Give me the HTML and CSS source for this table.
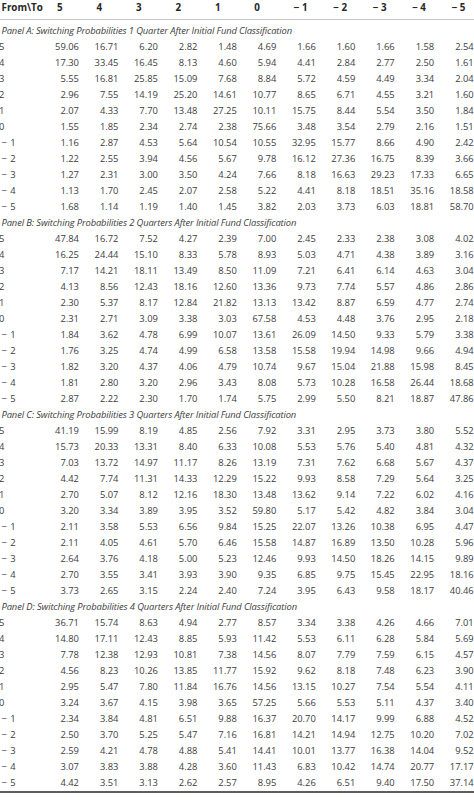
FILE: index.html
```html
<!DOCTYPE html>
<html lang="en">
<head>
<meta charset="utf-8">
<title>Switching Probabilities</title>
<link rel="stylesheet" href="styles.css">
</head>
<body>
<table class="matrix">
<colgroup>
<col class="lab-col">
<col class="val-col"><col class="val-col"><col class="val-col"><col class="val-col"><col class="val-col"><col class="val-col"><col class="val-col"><col class="val-col"><col class="val-col"><col class="val-col"><col class="val-col">
</colgroup>
<thead>
<tr><th class="corner">From\To</th><th>5</th><th>4</th><th>3</th><th>2</th><th>1</th><th>0</th><th>− 1</th><th>− 2</th><th>− 3</th><th>− 4</th><th>− 5</th></tr>
</thead>
<tbody>
<tr class="panel first"><td colspan="12">Panel A: Switching Probabilities 1 Quarter After Initial Fund Classification</td></tr>
<tr><td class="lab pos">5</td><td>59.06</td><td>16.71</td><td>6.20</td><td>2.82</td><td>1.48</td><td>4.69</td><td>1.66</td><td>1.60</td><td>1.66</td><td>1.58</td><td>2.54</td></tr>
<tr><td class="lab pos">4</td><td>17.30</td><td>33.45</td><td>16.45</td><td>8.13</td><td>4.60</td><td>5.94</td><td>4.41</td><td>2.84</td><td>2.77</td><td>2.50</td><td>1.61</td></tr>
<tr><td class="lab pos">3</td><td>5.55</td><td>16.81</td><td>25.85</td><td>15.09</td><td>7.68</td><td>8.84</td><td>5.72</td><td>4.59</td><td>4.49</td><td>3.34</td><td>2.04</td></tr>
<tr><td class="lab pos">2</td><td>2.96</td><td>7.55</td><td>14.19</td><td>25.20</td><td>14.61</td><td>10.77</td><td>8.65</td><td>6.71</td><td>4.55</td><td>3.21</td><td>1.60</td></tr>
<tr><td class="lab pos">1</td><td>2.07</td><td>4.33</td><td>7.70</td><td>13.48</td><td>27.25</td><td>10.11</td><td>15.75</td><td>8.44</td><td>5.54</td><td>3.50</td><td>1.84</td></tr>
<tr><td class="lab pos">0</td><td>1.55</td><td>1.85</td><td>2.34</td><td>2.74</td><td>2.38</td><td>75.66</td><td>3.48</td><td>3.54</td><td>2.79</td><td>2.16</td><td>1.51</td></tr>
<tr><td class="lab">− 1</td><td>1.16</td><td>2.87</td><td>4.53</td><td>5.64</td><td>10.54</td><td>10.55</td><td>32.95</td><td>15.77</td><td>8.66</td><td>4.90</td><td>2.42</td></tr>
<tr><td class="lab">− 2</td><td>1.22</td><td>2.55</td><td>3.94</td><td>4.56</td><td>5.67</td><td>9.78</td><td>16.12</td><td>27.36</td><td>16.75</td><td>8.39</td><td>3.66</td></tr>
<tr><td class="lab">− 3</td><td>1.27</td><td>2.31</td><td>3.00</td><td>3.50</td><td>4.24</td><td>7.66</td><td>8.18</td><td>16.63</td><td>29.23</td><td>17.33</td><td>6.65</td></tr>
<tr><td class="lab">− 4</td><td>1.13</td><td>1.70</td><td>2.45</td><td>2.07</td><td>2.58</td><td>5.22</td><td>4.41</td><td>8.18</td><td>18.51</td><td>35.16</td><td>18.58</td></tr>
<tr><td class="lab">− 5</td><td>1.68</td><td>1.14</td><td>1.19</td><td>1.40</td><td>1.45</td><td>3.82</td><td>2.03</td><td>3.73</td><td>6.03</td><td>18.81</td><td>58.70</td></tr>
<tr class="panel"><td colspan="12">Panel B: Switching Probabilities 2 Quarters After Initial Fund Classification</td></tr>
<tr><td class="lab pos">5</td><td>47.84</td><td>16.72</td><td>7.52</td><td>4.27</td><td>2.39</td><td>7.00</td><td>2.45</td><td>2.33</td><td>2.38</td><td>3.08</td><td>4.02</td></tr>
<tr><td class="lab pos">4</td><td>16.25</td><td>24.44</td><td>15.10</td><td>8.33</td><td>5.78</td><td>8.93</td><td>5.03</td><td>4.71</td><td>4.38</td><td>3.89</td><td>3.16</td></tr>
<tr><td class="lab pos">3</td><td>7.17</td><td>14.21</td><td>18.11</td><td>13.49</td><td>8.50</td><td>11.09</td><td>7.21</td><td>6.41</td><td>6.14</td><td>4.63</td><td>3.04</td></tr>
<tr><td class="lab pos">2</td><td>4.13</td><td>8.56</td><td>12.43</td><td>18.16</td><td>12.60</td><td>13.36</td><td>9.73</td><td>7.74</td><td>5.57</td><td>4.86</td><td>2.86</td></tr>
<tr><td class="lab pos">1</td><td>2.30</td><td>5.37</td><td>8.17</td><td>12.84</td><td>21.82</td><td>13.13</td><td>13.42</td><td>8.87</td><td>6.59</td><td>4.77</td><td>2.74</td></tr>
<tr><td class="lab pos">0</td><td>2.31</td><td>2.71</td><td>3.09</td><td>3.38</td><td>3.03</td><td>67.58</td><td>4.53</td><td>4.48</td><td>3.76</td><td>2.95</td><td>2.18</td></tr>
<tr><td class="lab">− 1</td><td>1.84</td><td>3.62</td><td>4.78</td><td>6.99</td><td>10.07</td><td>13.61</td><td>26.09</td><td>14.50</td><td>9.33</td><td>5.79</td><td>3.38</td></tr>
<tr><td class="lab">− 2</td><td>1.76</td><td>3.25</td><td>4.74</td><td>4.99</td><td>6.58</td><td>13.58</td><td>15.58</td><td>19.94</td><td>14.98</td><td>9.66</td><td>4.94</td></tr>
<tr><td class="lab">− 3</td><td>1.82</td><td>3.20</td><td>4.37</td><td>4.06</td><td>4.79</td><td>10.74</td><td>9.67</td><td>15.04</td><td>21.88</td><td>15.98</td><td>8.45</td></tr>
<tr><td class="lab">− 4</td><td>1.81</td><td>2.80</td><td>3.20</td><td>2.96</td><td>3.43</td><td>8.08</td><td>5.73</td><td>10.28</td><td>16.58</td><td>26.44</td><td>18.68</td></tr>
<tr><td class="lab">− 5</td><td>2.87</td><td>2.22</td><td>2.30</td><td>1.70</td><td>1.74</td><td>5.75</td><td>2.99</td><td>5.50</td><td>8.21</td><td>18.87</td><td>47.86</td></tr>
<tr class="panel"><td colspan="12">Panel C: Switching Probabilities 3 Quarters After Initial Fund Classification</td></tr>
<tr><td class="lab pos">5</td><td>41.19</td><td>15.99</td><td>8.19</td><td>4.85</td><td>2.56</td><td>7.92</td><td>3.31</td><td>2.95</td><td>3.73</td><td>3.80</td><td>5.52</td></tr>
<tr><td class="lab pos">4</td><td>15.73</td><td>20.33</td><td>13.31</td><td>8.40</td><td>6.33</td><td>10.08</td><td>5.53</td><td>5.76</td><td>5.40</td><td>4.81</td><td>4.32</td></tr>
<tr><td class="lab pos">3</td><td>7.03</td><td>13.72</td><td>14.97</td><td>11.17</td><td>8.26</td><td>13.19</td><td>7.31</td><td>7.62</td><td>6.68</td><td>5.67</td><td>4.37</td></tr>
<tr><td class="lab pos">2</td><td>4.42</td><td>7.74</td><td>11.31</td><td>14.33</td><td>12.29</td><td>15.22</td><td>9.93</td><td>8.58</td><td>7.29</td><td>5.64</td><td>3.25</td></tr>
<tr><td class="lab pos">1</td><td>2.70</td><td>5.07</td><td>8.12</td><td>12.16</td><td>18.30</td><td>13.48</td><td>13.62</td><td>9.14</td><td>7.22</td><td>6.02</td><td>4.16</td></tr>
<tr><td class="lab pos">0</td><td>3.20</td><td>3.34</td><td>3.89</td><td>3.95</td><td>3.52</td><td>59.80</td><td>5.17</td><td>5.42</td><td>4.82</td><td>3.84</td><td>3.04</td></tr>
<tr><td class="lab">− 1</td><td>2.11</td><td>3.58</td><td>5.53</td><td>6.56</td><td>9.84</td><td>15.25</td><td>22.07</td><td>13.26</td><td>10.38</td><td>6.95</td><td>4.47</td></tr>
<tr><td class="lab">− 2</td><td>2.11</td><td>4.05</td><td>4.61</td><td>5.70</td><td>6.46</td><td>15.58</td><td>14.87</td><td>16.89</td><td>13.50</td><td>10.28</td><td>5.96</td></tr>
<tr><td class="lab">− 3</td><td>2.64</td><td>3.76</td><td>4.18</td><td>5.00</td><td>5.23</td><td>12.46</td><td>9.93</td><td>14.50</td><td>18.26</td><td>14.15</td><td>9.89</td></tr>
<tr><td class="lab">− 4</td><td>2.70</td><td>3.55</td><td>3.41</td><td>3.93</td><td>3.90</td><td>9.35</td><td>6.85</td><td>9.75</td><td>15.45</td><td>22.95</td><td>18.16</td></tr>
<tr><td class="lab">− 5</td><td>3.73</td><td>2.65</td><td>3.15</td><td>2.24</td><td>2.40</td><td>7.24</td><td>3.95</td><td>6.43</td><td>9.58</td><td>18.17</td><td>40.46</td></tr>
<tr class="panel"><td colspan="12">Panel D: Switching Probabilities 4 Quarters After Initial Fund Classification</td></tr>
<tr><td class="lab pos">5</td><td>36.71</td><td>15.74</td><td>8.63</td><td>4.94</td><td>2.77</td><td>8.57</td><td>3.34</td><td>3.38</td><td>4.26</td><td>4.66</td><td>7.01</td></tr>
<tr><td class="lab pos">4</td><td>14.80</td><td>17.11</td><td>12.43</td><td>8.85</td><td>5.93</td><td>11.42</td><td>5.53</td><td>6.11</td><td>6.28</td><td>5.84</td><td>5.69</td></tr>
<tr><td class="lab pos">3</td><td>7.78</td><td>12.38</td><td>12.93</td><td>10.81</td><td>7.38</td><td>14.56</td><td>8.07</td><td>7.79</td><td>7.59</td><td>6.15</td><td>4.57</td></tr>
<tr><td class="lab pos">2</td><td>4.56</td><td>8.23</td><td>10.26</td><td>13.85</td><td>11.77</td><td>15.92</td><td>9.62</td><td>8.18</td><td>7.48</td><td>6.23</td><td>3.90</td></tr>
<tr><td class="lab pos">1</td><td>2.95</td><td>5.47</td><td>7.80</td><td>11.84</td><td>16.76</td><td>14.56</td><td>13.15</td><td>10.27</td><td>7.54</td><td>5.54</td><td>4.11</td></tr>
<tr><td class="lab pos">0</td><td>3.24</td><td>3.67</td><td>4.15</td><td>3.98</td><td>3.65</td><td>57.25</td><td>5.66</td><td>5.53</td><td>5.11</td><td>4.37</td><td>3.40</td></tr>
<tr><td class="lab">− 1</td><td>2.34</td><td>3.84</td><td>4.81</td><td>6.51</td><td>9.88</td><td>16.37</td><td>20.70</td><td>14.17</td><td>9.99</td><td>6.88</td><td>4.52</td></tr>
<tr><td class="lab">− 2</td><td>2.50</td><td>3.70</td><td>5.25</td><td>5.47</td><td>7.16</td><td>16.81</td><td>14.21</td><td>14.94</td><td>12.75</td><td>10.20</td><td>7.02</td></tr>
<tr><td class="lab">− 3</td><td>2.59</td><td>4.21</td><td>4.78</td><td>4.88</td><td>5.41</td><td>14.41</td><td>10.01</td><td>13.77</td><td>16.38</td><td>14.04</td><td>9.52</td></tr>
<tr><td class="lab">− 4</td><td>3.07</td><td>3.83</td><td>3.88</td><td>4.28</td><td>3.60</td><td>11.43</td><td>6.83</td><td>10.42</td><td>14.74</td><td>20.77</td><td>17.17</td></tr>
<tr class="last"><td class="lab">− 5</td><td>4.42</td><td>3.51</td><td>3.13</td><td>2.62</td><td>2.57</td><td>8.95</td><td>4.26</td><td>6.51</td><td>9.40</td><td>17.50</td><td>37.14</td></tr>
</tbody>
</table>
</body>
</html>
```

FILE: styles.css
```css
html, body {
  margin: 0;
  padding: 0;
  background: #ffffff;
}

body {
  width: 474px;
  height: 800px;
  overflow: hidden;
  font-family: "Open Sans", "Noto Sans", sans-serif;
  color: #3d3d3d;
}

.matrix {
  border-collapse: collapse;
  table-layout: fixed;
  width: 473.7px;
  font-size: 9.4px;
}

.lab-col {
  width: 39.5px;
}

.val-col {
  width: 39.47px;
}

.matrix th,
.matrix td {
  padding: 0;
  white-space: nowrap;
  overflow: visible;
}

.matrix thead th {
  height: 19px;
  line-height: 16px;
  vertical-align: top;
  text-align: left;
  padding-left: 17.5px;
  font-size: 9.8px;
  font-weight: 700;
  color: #262626;
  border-bottom: 1px solid #c6c6c6;
}

.matrix thead th.corner {
  padding-left: 1.5px;
}

.matrix tbody td {
  height: 16px;
  line-height: 16px;
  text-align: right;
  vertical-align: middle;
}

.matrix tbody td.lab {
  text-align: left;
  padding-left: 1.5px;
  word-spacing: 1px;
}

.matrix tbody td.pos {
  padding-left: 0;
  text-indent: -1px;
}

.matrix tr.panel td {
  text-align: left;
  font-style: italic;
  letter-spacing: -0.12px;
  padding-left: 1.5px;
}

.matrix tr.panel.first td {
  height: 19px;
  vertical-align: bottom;
}

.matrix tr.last td {
  border-bottom: 2px solid #5e5e5e;
}
```
